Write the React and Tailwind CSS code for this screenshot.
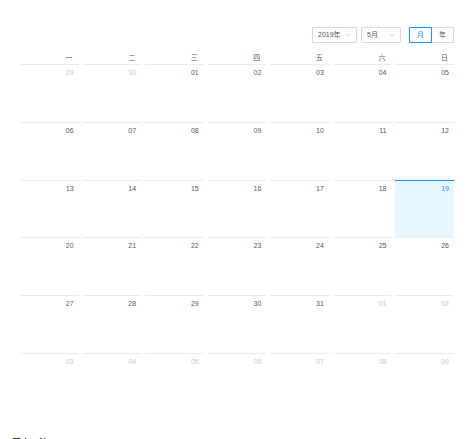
import React from "react";

const weekDays = ["一", "二", "三", "四", "五", "六", "日"];

// May 2019, weeks start on Monday
const weeks = [
  [["29", true], ["30", true], ["01"], ["02"], ["03"], ["04"], ["05"]],
  [["06"], ["07"], ["08"], ["09"], ["10"], ["11"], ["12"]],
  [["13"], ["14"], ["15"], ["16"], ["17"], ["18"], ["19"]],
  [["20"], ["21"], ["22"], ["23"], ["24"], ["25"], ["26"]],
  [["27"], ["28"], ["29"], ["30"], ["31"], ["01", true], ["02", true]],
  [["03", true], ["04", true], ["05", true], ["06", true], ["07", true], ["08", true], ["09", true]],
];

const Chevron = () => (
  <svg width="6" height="4" viewBox="0 0 12 7" className="text-[#bfbfbf]">
    <path d="M1 1l5 5 5-5" fill="none" stroke="currentColor" strokeWidth="1.4" />
  </svg>
);

const Select = ({ label, width }) => (
  <div
    className={`flex items-center justify-between h-4 px-[5px] border border-[#d9d9d9] rounded-[1px] bg-white text-[7px] text-[#595959] ${width}`}
  >
    <span>{label}</span>
    <Chevron />
  </div>
);

const DateCell = ({ value, muted, selected }) => {
  let cls = "border-[#ebebeb] text-[#595959]";
  if (muted) cls = "border-[#ebebeb] text-[#c8c8c8]";
  if (selected) cls = "border-[#1890ff] bg-[#e6f7ff] text-[#1890ff]";
  return (
    <div className={`h-[57.8px] border-t pt-[2px] px-[5px] ${cls}`}>
      <div className="text-right text-[7px] leading-[12px]">{value}</div>
    </div>
  );
};

export default function App() {
  return (
    <div
      className="bg-white w-[474px] h-[439px] overflow-hidden"
      style={{ fontFamily: '"Liberation Sans", "Noto Sans CJK SC", sans-serif' }}
    >
      <div className="px-5 pt-[21px]">
        <div className="flex justify-end items-center py-[6px]">
          <Select label="2019年" width="w-[45px]" />
          <div className="ml-1">
            <Select label="5月" width="w-[40px]" />
          </div>
          <div className="flex ml-2 text-[7px]">
            <div className="w-[23px] h-4 flex items-center justify-center border border-[#1890ff] text-[#1890ff] rounded-l-[1px]">
              月
            </div>
            <div className="w-[22px] h-4 flex items-center justify-center border border-l-0 border-[#d9d9d9] text-[#595959] rounded-r-[1px]">
              年
            </div>
          </div>
        </div>

        <div className="grid grid-cols-7 gap-x-1">
          {weekDays.map((d) => (
            <div key={d} className="h-[15px] pr-[6px] pt-[3px] text-right text-[7px] leading-[12px] text-[#595959]">
              {d}
            </div>
          ))}
        </div>

        {weeks.map((week, i) => (
          <div key={i} className="grid grid-cols-7 gap-x-1">
            {week.map(([v, muted], j) => (
              <DateCell key={j} value={v} muted={muted} selected={i === 2 && j === 6} />
            ))}
          </div>
        ))}

        <div className="mt-[26px] -ml-[8px] text-[9px] leading-[12px] text-[#262626] font-bold">
          基本用法
        </div>
      </div>
    </div>
  );
}
